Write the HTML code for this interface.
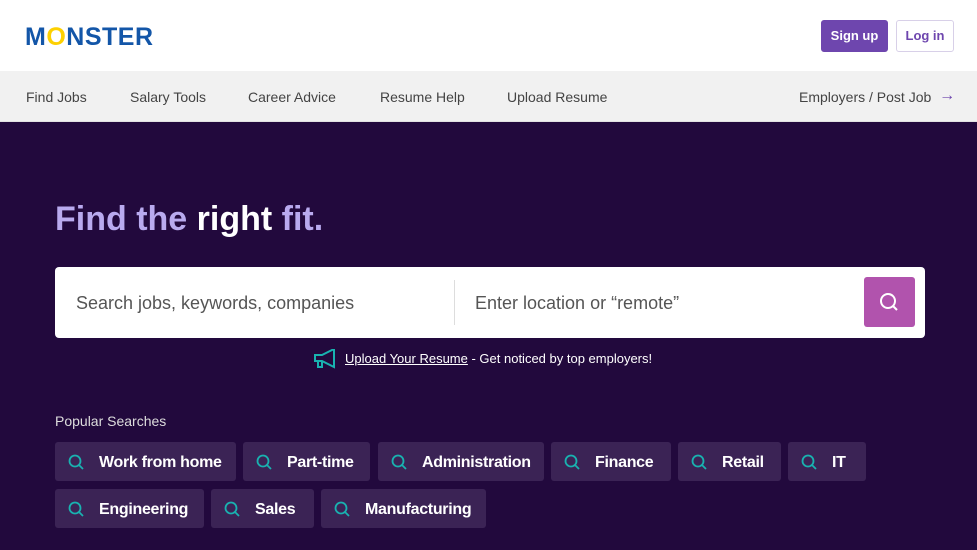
<!DOCTYPE html>
<html><head><style>
*{margin:0;padding:0;box-sizing:border-box}
body{width:977px;height:550px;overflow:hidden;font-family:"Liberation Sans",sans-serif;background:#22093d}
.top{height:71px;background:#fff;position:relative}
.logo{position:absolute;left:25px;top:23px;font-size:25px;font-weight:bold;color:#1356a8;letter-spacing:0.5px}
.logo span{color:#fdd000}
.btn{position:absolute;top:20px;height:32px;border-radius:3px;font-size:13px;font-weight:bold;line-height:30px;text-align:center}
.su{left:821px;width:67px;background:#6e46ae;color:#fff;border:1px solid #6e46ae}
.li{left:896px;width:58px;background:#fff;color:#6e46ae;border:1px solid #d8d0e8}
.nav{height:51px;background:#f1f1f1;position:relative;font-size:14px;color:#444;border-bottom:1px solid #e2e2e2}
.nav a{position:absolute;top:18px;line-height:16px}
.arr{color:#6e46ae;margin-left:4px;font-size:16px;font-weight:bold;line-height:1;vertical-align:top;display:inline-block;margin-top:-1px}
h1{position:absolute;left:55px;top:200px;font-size:34px;color:#b9aaef;font-weight:bold}
h1 b{color:#fff}
.search{position:absolute;left:55px;top:267px;width:870px;height:71px;background:#fff;border-radius:4px}
.search .t{position:absolute;top:26px;font-size:18px;color:#555}
.div{position:absolute;left:399px;top:13px;width:1px;height:45px;background:#ddd}
.sb{position:absolute;left:809px;top:10px;width:51px;height:50px;background:#b153ad;border-radius:3px}
.up{position:absolute;left:313px;top:351px;font-size:13px;color:#fff}
.up u{margin-left:32px}
.pop{position:absolute;left:55px;top:413px;font-size:14px;color:#ddd}
.chip{position:absolute;height:39px;background:#3b2355;border-radius:3px;color:#fff;font-weight:bold;font-size:16px;line-height:41px;padding-left:44px;letter-spacing:-0.3px}
.chip svg{position:absolute;left:13px;top:12px}
</style></head><body>
<div class="top"><div class="logo">M<span>O</span>NSTER</div>
<div class="btn su">Sign up</div><div class="btn li">Log in</div></div>
<div class="nav"><a style="left:26px">Find Jobs</a><a style="left:130px">Salary Tools</a><a style="left:248px">Career Advice</a><a style="left:380px">Resume Help</a><a style="left:507px">Upload Resume</a><a style="left:799px">Employers / Post Job <span class="arr">→</span></a></div>
<h1>Find the <b>right</b> fit.</h1>
<div class="search"><div class="t" style="left:21px">Search jobs, keywords, companies</div><div class="div"></div><div class="t" style="left:420px">Enter location or “remote”</div>
<div class="sb"><svg width="51" height="50" viewBox="0 0 51 50"><circle cx="24" cy="24" r="7" fill="none" stroke="#fff" stroke-width="2"/><line x1="29" y1="29" x2="33" y2="33" stroke="#fff" stroke-width="2"/></svg></div></div>
<div class="up"><svg style="position:absolute;left:0;top:-2px" width="24" height="22" viewBox="0 0 24 22"><path d="M2 6h7l12-6v18L9 12H2z M5 12v6h4v-6" fill="none" stroke="#19b2b0" stroke-width="2"/></svg><u>Upload Your Resume</u> - Get noticed by top employers!</div>
<div class="pop">Popular Searches</div>
<div class="chip" style="left:55px;top:442px;width:181px"><svg width="16" height="16"><circle cx="7" cy="7" r="5.5" fill="none" stroke="#19b2b0" stroke-width="1.8"/><line x1="11" y1="11" x2="15" y2="15" stroke="#19b2b0" stroke-width="1.8"/></svg>Work from home</div>
<div class="chip" style="left:243px;top:442px;width:127px"><svg width="16" height="16"><circle cx="7" cy="7" r="5.5" fill="none" stroke="#19b2b0" stroke-width="1.8"/><line x1="11" y1="11" x2="15" y2="15" stroke="#19b2b0" stroke-width="1.8"/></svg>Part-time</div>
<div class="chip" style="left:378px;top:442px;width:166px"><svg width="16" height="16"><circle cx="7" cy="7" r="5.5" fill="none" stroke="#19b2b0" stroke-width="1.8"/><line x1="11" y1="11" x2="15" y2="15" stroke="#19b2b0" stroke-width="1.8"/></svg>Administration</div>
<div class="chip" style="left:551px;top:442px;width:120px"><svg width="16" height="16"><circle cx="7" cy="7" r="5.5" fill="none" stroke="#19b2b0" stroke-width="1.8"/><line x1="11" y1="11" x2="15" y2="15" stroke="#19b2b0" stroke-width="1.8"/></svg>Finance</div>
<div class="chip" style="left:678px;top:442px;width:103px"><svg width="16" height="16"><circle cx="7" cy="7" r="5.5" fill="none" stroke="#19b2b0" stroke-width="1.8"/><line x1="11" y1="11" x2="15" y2="15" stroke="#19b2b0" stroke-width="1.8"/></svg>Retail</div>
<div class="chip" style="left:788px;top:442px;width:78px"><svg width="16" height="16"><circle cx="7" cy="7" r="5.5" fill="none" stroke="#19b2b0" stroke-width="1.8"/><line x1="11" y1="11" x2="15" y2="15" stroke="#19b2b0" stroke-width="1.8"/></svg>IT</div>
<div class="chip" style="left:55px;top:489px;width:149px"><svg width="16" height="16"><circle cx="7" cy="7" r="5.5" fill="none" stroke="#19b2b0" stroke-width="1.8"/><line x1="11" y1="11" x2="15" y2="15" stroke="#19b2b0" stroke-width="1.8"/></svg>Engineering</div>
<div class="chip" style="left:211px;top:489px;width:103px"><svg width="16" height="16"><circle cx="7" cy="7" r="5.5" fill="none" stroke="#19b2b0" stroke-width="1.8"/><line x1="11" y1="11" x2="15" y2="15" stroke="#19b2b0" stroke-width="1.8"/></svg>Sales</div>
<div class="chip" style="left:321px;top:489px;width:165px"><svg width="16" height="16"><circle cx="7" cy="7" r="5.5" fill="none" stroke="#19b2b0" stroke-width="1.8"/><line x1="11" y1="11" x2="15" y2="15" stroke="#19b2b0" stroke-width="1.8"/></svg>Manufacturing</div>
</body></html>
